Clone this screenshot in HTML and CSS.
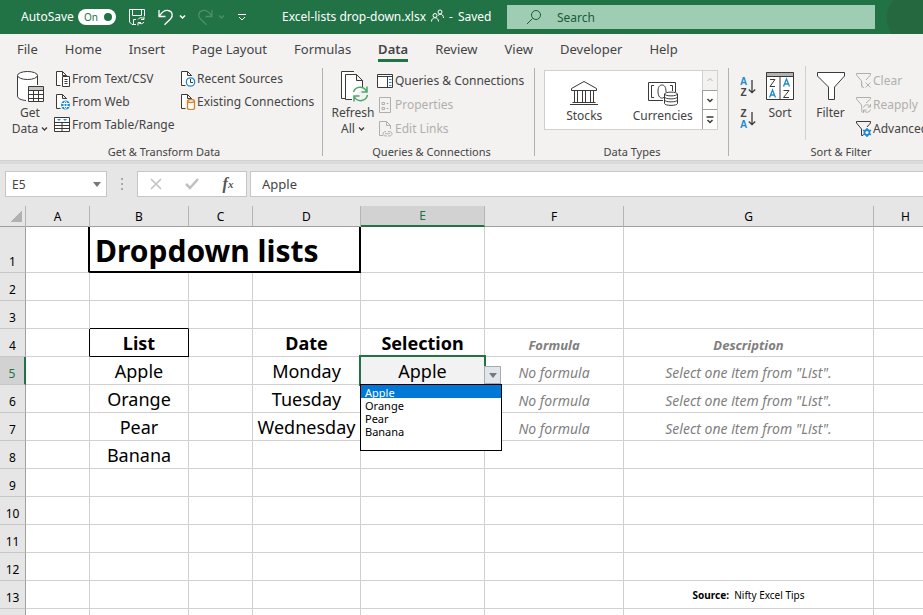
FILE: index.html
```
<!DOCTYPE html>
<html lang="en">
<head>
    <meta charset="UTF-8">
    <meta name="viewport" content="width=device-width, initial-scale=1.0">
    <title>Excel-lists drop-down.xlsx</title>
    <link rel="stylesheet" href="styles.css">
</head>
<body>

<header class="titlebar">
    <div class="quick-access">
        <label class="autosave">AutoSave
            <input type="checkbox" role="switch" checked>
            <span class="toggle">On<i class="knob"></i></span>
        </label>
        <button class="tool save" aria-label="Save">
            <svg width="18" height="18" viewBox="0 0 18 18"><path d="M8 16.500H4L1.500 14V1.500H16.500V8M4.500 1.500V7.500H13.500V1.500M5.500 16V11.500H8M10 11.500A3.500 3.500 0 0 1 15.800 11M16 8.500V11.500H13M16 14A3.500 3.500 0 0 1 10.300 14.500M10 17.500V14.500H13"/></svg>
        </button>
        <button class="tool undo" aria-label="Undo">
            <svg width="28" height="18" viewBox="0 0 28 18"><path stroke-width="1.300" d="M1 2V8.500H7.500M1.500 8C4 4 7 2 10 2.500C14.500 3 15.500 8 12.500 11L6.500 16.800"/><path stroke-width="1.500" d="M22 7.500L24.500 10L27 7.500"/></svg>
        </button>
        <button class="tool redo" aria-label="Redo" disabled>
            <svg width="28" height="18" viewBox="0 0 28 18"><path stroke-width="1.300" d="M14 2V8.500H7.500M13.500 8C11 4 8 2 5 2.500C.5 3 -.5 8 2.500 11L8.500 16.800"/><path stroke-width="1.500" d="M21 7.500L23.500 10L26 7.500"/></svg>
        </button>
        <button class="tool" aria-label="Customize Quick Access Toolbar">
            <svg width="8" height="8" viewBox="0 0 8 8"><path d="M0 1.500H8M1 4L4 7L7 4"/></svg>
        </button>
    </div>
    <div class="doc-title">
        <span>Excel-lists drop-down.xlsx</span>
        <svg width="13" height="14" viewBox="0 0 13 14"><circle cx="4" cy="6.500" r="2"/><path d="M.5 12.500C.5 7.500 7.500 7.500 7.500 12.500"/><circle cx="9" cy="3" r="2"/><path d="M7 6.500C9.500 4 12.500 5.500 12.500 9"/></svg>
        <span>-</span>
        <span>Saved</span>
    </div>
    <label class="search">
        <svg width="16" height="16" viewBox="0 0 16 16"><circle cx="10" cy="6" r="4.500"/><path d="M6.500 9.500L1 15"/></svg>
        <input type="text" placeholder="Search" aria-label="Search">
    </label>
    <div class="corner"></div>
</header>

<nav class="tabs">
    <button>File</button>
    <button>Home</button>
    <button>Insert</button>
    <button>Page Layout</button>
    <button>Formulas</button>
    <button class="active">Data</button>
    <button>Review</button>
    <button>View</button>
    <button>Developer</button>
    <button>Help</button>
</nav>

<div class="ribbon">
    <section class="group get-data">
        <div class="group-body">
            <button class="big">
                <svg width="30" height="34" viewBox="0 0 30 34"><path fill="#fff" d="M2.500 6V26C2.500 29 7 30.500 12 30.500H22V6"/><path class="ink" d="M2.500 6V26C2.500 28.500 6 30 11 30.500M22.500 6V15"/><ellipse class="ink" cx="12.500" cy="5.500" rx="10" ry="4" fill="#fff"/><path fill="#fff" d="M13 15H29V32H13z"/><path fill="#c8c6c4" d="M13 16H28V20H13z"/><path class="ink" d="M13.500 16.500H28.500V31.500H13.500zM13.500 20.500H28.500M13.500 24.500H28.500M13.500 28.500H28.500M18.500 20.500V31.500M23.500 20.500V31.500"/></svg>
                <span>Get</span>
                <span>Data <svg width="7" height="7" viewBox="0 0 7 7"><path class="ink" stroke-width="1.300" d="M1 1.500L3.500 4L6 1.500"/></svg></span>
            </button>
            <div class="stack">
                <button class="small">
                    <svg width="17" height="17" viewBox="0 0 17 17"><path class="page" d="M6.500 15.500H2.500V1.500H8.500L12.500 5.500V6M8.500 1.500V5.500H12.500"/><path class="ink" fill="#fff" d="M8.500 6.500H15.500V16.500H8.500zM10.500 9.500H13.500M10.500 11.500H13.500M10.500 13.500H13.500"/></svg>
                    From Text/CSV
                </button>
                <button class="small">
                    <svg width="17" height="17" viewBox="0 0 17 17"><path class="page" d="M6.500 15.500H2.500V1.500H8.500L12.500 5.500V6M8.500 1.500V5.500H12.500"/><circle cx="11.500" cy="12" r="4.500" fill="#1e8bcd"/><path stroke="#fff" fill="none" d="M7.500 10.500H15.500M7.500 13.500H15.500M11.500 8C9.500 10 9.500 14 11.500 16C13.500 14 13.500 10 11.500 8"/></svg>
                    From Web
                </button>
                <button class="small">
                    <svg width="17" height="17" viewBox="0 0 17 17"><path fill="#fff" d="M1 1H16V16H1z"/><path class="ink" d="M.5 1.500H15.500V15.500H.5zM.5 6.500H15.500M.5 9.500H15.500M.5 12.500H15.500M8 6.500V15.500"/><path fill="#1e8bcd" d="M3 3H7L5 5zM9 3H13L11 5z"/></svg>
                    From Table/Range
                </button>
            </div>
            <div class="stack">
                <button class="small">
                    <svg width="17" height="17" viewBox="0 0 17 17"><path class="page" d="M6.500 15.500H2.500V1.500H8.500L12.500 5.500V6M8.500 1.500V5.500H12.500"/><circle cx="11.500" cy="12" r="4.200" fill="#fff" stroke="#1e8bcd" stroke-width="1.300"/><path class="ink" d="M11.500 9V12.500H14"/></svg>
                    Recent Sources
                </button>
                <button class="small">
                    <svg width="17" height="17" viewBox="0 0 17 17"><path class="page" d="M6.500 15.500H2.500V1.500H8.500L12.500 5.500V6M8.500 1.500V5.500H12.500"/><path fill="#fff" stroke="#d9822b" stroke-width="1.300" d="M8.500 8V15.500C9 17 15 17 15.500 15.500V8C15 6 9 6 8.500 8C9 10 15 10 15.500 8"/></svg>
                    Existing Connections
                </button>
            </div>
        </div>
        <h2>Get &amp; Transform Data</h2>
    </section>

    <section class="group queries">
        <div class="group-body">
            <button class="big">
                <svg width="30" height="34" viewBox="0 0 30 34"><path class="ink" fill="#fff" d="M8 28.500H3.500V1.500H16"/><path class="ink" fill="#fff" d="M14 29.500H7.500V4.500H18.500L24.500 10.500V17M18.500 4.500V10.500H24.500"/><path fill="none" stroke="#4ea66a" stroke-width="1.500" d="M15.500 22A7 7 0 0 1 28.500 21.500M29 16.500V22H23.500M29.500 25A7 7 0 0 1 16.500 27M16 31.500V26H21.500"/></svg>
                <span>Refresh</span>
                <span>All <svg width="7" height="7" viewBox="0 0 7 7"><path class="ink" stroke-width="1.300" d="M1 1.500L3.500 4L6 1.500"/></svg></span>
            </button>
            <div class="stack loose">
                <button class="small">
                    <svg width="17" height="17" viewBox="0 0 17 17"><path class="ink" fill="#fff" d="M.5 2.500H15.500V15.500H.5zM.5 4.500H15.500M10.500 4.500V15.500"/><path stroke="#1e8bcd" d="M12 7.500H14.500M12 10.500H14.500M12 13.500H14.500"/></svg>
                    Queries &amp; Connections
                </button>
                <button class="small" disabled>
                    <svg width="17" height="17" viewBox="0 0 17 17"><path class="dim" d="M2.500 1.500H13.500V16.500H2.500zM5 6.500H7.500V8.500H5zM5 11.500H7.500V13.500H5zM9.500 7.500H11.500M9.500 12.500H11.500"/></svg>
                    Properties
                </button>
                <button class="small" disabled>
                    <svg width="17" height="17" viewBox="0 0 17 17"><path class="dim" d="M6 15.500H2.500V1.500H9.500L13.500 5.500V9M9.500 1.500V5.500H13.500M9 11.500C5 11.500 5 16 9 16H10M11 16H12C16 16 16 11.500 12 11.500H11M8 13.700H13"/></svg>
                    Edit Links
                </button>
            </div>
        </div>
        <h2>Queries &amp; Connections</h2>
    </section>

    <section class="group types">
        <div class="group-body">
            <div class="gallery">
                <button class="type">
                    <svg width="30" height="26" viewBox="0 0 30 26"><path class="ink" d="M2.500 8.500L15 1.500L27.500 8.500V10.500H2.500zM5.500 10.500V22M8.500 10.500V22M13.500 10.500V22M16.500 10.500V22M21.500 10.500V22M24.500 10.500V22M3.500 22.500H26.500M1 24.500H29"/></svg>
                    Stocks
                </button>
                <button class="type">
                    <svg width="32" height="26" viewBox="0 0 32 26"><path class="ink" d="M16 20.500H1.500V2.500H28.500V12M7 5.500H4.500V17.500H7M23 5.500H25.500V11"/><path class="ink" d="M17 17.500C13 19.500 11 16 11 11.500C11 7 12.500 5 15 5C17.500 5 19 7 19 12"/><path class="ink" fill="#fff" d="M17.500 14V23.500C18 26 30 26 30.500 23.500V14C30 11.500 18 11.500 17.500 14C18 16.500 30 16.500 30.500 14M17.500 17C18 19.500 30 19.500 30.500 17M17.500 20C18 22.500 30 22.500 30.500 20"/></svg>
                    Currencies
                </button>
                <div class="scroller">
                    <button aria-label="Scroll up" disabled><svg width="8" height="8" viewBox="0 0 8 8"><path class="dim" d="M1.500 5L4 2.500L6.500 5"/></svg></button>
                    <button aria-label="Scroll down"><svg width="8" height="8" viewBox="0 0 8 8"><path class="ink" stroke-width="1.500" d="M1.500 3L4 5.500L6.500 3"/></svg></button>
                    <button aria-label="More data types"><svg width="8" height="8" viewBox="0 0 8 8"><path class="ink" stroke-width="1.500" d="M.5 1H7.500M1.500 4L4 6.500L6.500 4"/></svg></button>
                </div>
            </div>
        </div>
        <h2>Data Types</h2>
    </section>

    <section class="group sort">
        <div class="group-body">
            <div class="sort-order">
                <button class="order" aria-label="Sort A to Z">
                    <span><b class="a">A</b><b>Z</b></span>
                    <svg width="8" height="14" viewBox="0 0 8 14"><path class="ink" stroke-width="1.300" d="M4 0V12.500M.8 9.500L4 12.700L7.200 9.500"/></svg>
                </button>
                <button class="order" aria-label="Sort Z to A">
                    <span><b>Z</b><b class="a">A</b></span>
                    <svg width="8" height="14" viewBox="0 0 8 14"><path class="ink" stroke-width="1.300" d="M4 0V12.500M.8 9.500L4 12.700L7.200 9.500"/></svg>
                </button>
            </div>
            <button class="big sort-dialog">
                <svg width="30" height="34" viewBox="0 0 30 34"><path fill="#fff" d="M1 2H29V29H1z"/><path fill="#b5b3b1" d="M1 2H29V6H1z"/><path class="ink" d="M1.500 2.500H28.500V29.500H1.500zM1.500 6.500H28.500M15 6.500V29.500M5 9.500H10L5 16.500H10M18.500 20.500H24L18.500 27.500H24"/><path fill="none" stroke="#1e8bcd" stroke-width="1.300" d="M4.500 27.500L7.500 20L10.500 27.500M5.500 25H9.500M18.500 16.500L21.500 9L24.500 16.500M19.500 14H23.500"/></svg>
                <span>Sort</span>
            </button>
            <button class="big filter">
                <svg width="30" height="34" viewBox="0 0 30 34"><path class="ink" fill="#fff" d="M1.500 2.500H28.500V6L18.500 17V29.500H12.500V17L1.500 6z"/></svg>
                <span>Filter</span>
            </button>
            <div class="stack loose">
                <button class="small" disabled>
                    <svg width="17" height="17" viewBox="0 0 17 17"><path class="dim" d="M7 15.500L6.500 9L1.500 3V1.500H15.500V3L11 8M6.500 9V13.500L9 16M10.500 10.500L15.500 15.500M15.500 10.500L10.500 15.500"/></svg>
                    Clear
                </button>
                <button class="small" disabled>
                    <svg width="17" height="17" viewBox="0 0 17 17"><path class="dim" d="M7 16.500L6.500 9L1.500 3V1.500H15.500V3L11 7M8.500 11.500A3.500 3.500 0 0 1 15 10.500M15.500 8V11H12.500M15.500 13.500A3.500 3.500 0 0 1 9 14.500M8.500 17V14H11.500"/></svg>
                    Reapply
                </button>
                <button class="small">
                    <svg width="17" height="17" viewBox="0 0 17 17"><path class="ink" d="M8 15.500H6.500V9L1.500 3V1.500H15.500V3L12 7"/><circle cx="12" cy="12.500" r="2.500" fill="none" stroke="#1e8bcd" stroke-width="1.800"/><path stroke="#1e8bcd" stroke-width="1.500" d="M12 8V10M12 15V17M8 10.200L10 11.300M14 13.700L16 14.800M8 14.800L10 13.700M14 11.300L16 10.200"/></svg>
                    Advanced
                </button>
            </div>
        </div>
        <h2>Sort &amp; Filter</h2>
    </section>
</div>

<div class="formula-bar">
    <div class="name-box">
        <input type="text" value="E5" aria-label="Name box">
        <button aria-label="Show names"><i class="arrow"></i></button>
    </div>
    <svg class="grip" width="2" height="12" viewBox="0 0 2 12"><path fill="#a8a8a8" d="M0 0H2V2H0zM0 5H2V7H0zM0 10H2V12H0z"/></svg>
    <div class="formula-tools">
        <button aria-label="Cancel" disabled><svg width="12" height="12" viewBox="0 0 12 12"><path stroke="#c0c0c0" stroke-width="1.500" d="M1 1L11 11M11 1L1 11"/></svg></button>
        <button aria-label="Enter" disabled><svg width="14" height="12" viewBox="0 0 14 12"><path fill="none" stroke="#c0c0c0" stroke-width="2.500" d="M1 6L5 10L13 1"/></svg></button>
        <button class="fx" aria-label="Insert function">f<sub>x</sub></button>
    </div>
    <input class="formula" type="text" value="Apple" aria-label="Formula">
</div>

<table class="sheet">
    <colgroup>
        <col class="col-head"><col class="col-a"><col class="col-b"><col class="col-c"><col class="col-d"><col class="col-e"><col class="col-f"><col class="col-g"><col>
    </colgroup>
    <thead>
        <tr><th><i class="select-all"></i></th><th>A</th><th>B</th><th>C</th><th>D</th><th class="current">E</th><th>F</th><th>G</th><th class="col-h">H</th></tr>
    </thead>
    <tbody>
        <tr class="tall"><th>1</th><td class="edge-thick"></td><td class="heading" colspan="3">Dropdown lists</td><td></td><td></td><td></td><td></td></tr>
        <tr><th>2</th><td></td><td></td><td></td><td></td><td></td><td></td><td></td><td></td></tr>
        <tr><th>3</th><td></td><td class="edge-bottom"></td><td></td><td></td><td></td><td></td><td></td><td></td></tr>
        <tr><th>4</th><td class="edge-right"></td><td class="strong edge-bottom edge-right">List</td><td></td><td class="strong">Date</td><td class="strong">Selection</td><td class="note note-head">Formula</td><td class="note note-head">Description</td><td></td></tr>
        <tr>
            <th class="current">5</th><td></td><td>Apple</td><td></td><td>Monday</td>
            <td class="selected">Apple
                <div class="cell-frame"></div>
                <button class="cell-arrow" aria-label="Open list"><i class="arrow"></i></button>
                <select class="cell-list" size="5" aria-label="Selection">
                    <option selected>Apple</option>
                    <option>Orange</option>
                    <option>Pear</option>
                    <option>Banana</option>
                </select>
            </td>
            <td class="note">No formula</td><td class="note">Select one item from "List".</td><td></td>
        </tr>
        <tr><th>6</th><td></td><td>Orange</td><td></td><td>Tuesday</td><td></td><td class="note">No formula</td><td class="note">Select one item from "List".</td><td></td></tr>
        <tr><th>7</th><td></td><td>Pear</td><td></td><td>Wednesday</td><td></td><td class="note">No formula</td><td class="note">Select one item from "List".</td><td></td></tr>
        <tr><th>8</th><td></td><td>Banana</td><td></td><td></td><td></td><td></td><td></td><td></td></tr>
        <tr><th>9</th><td></td><td></td><td></td><td></td><td></td><td></td><td></td><td></td></tr>
        <tr><th>10</th><td></td><td></td><td></td><td></td><td></td><td></td><td></td><td></td></tr>
        <tr><th>11</th><td></td><td></td><td></td><td></td><td></td><td></td><td></td><td></td></tr>
        <tr><th>12</th><td></td><td></td><td></td><td></td><td></td><td></td><td></td><td></td></tr>
        <tr><th>13</th><td></td><td></td><td></td><td></td><td></td><td></td><td class="source"><b>Source:</b>&nbsp; Nifty Excel Tips</td><td></td></tr>
        <tr><th></th><td></td><td></td><td></td><td></td><td></td><td></td><td></td><td></td></tr>
    </tbody>
</table>

</body>
</html>
```
FILE: styles.css
```
* {
    box-sizing: border-box;
}
body {
    margin: 0;
    height: 100vh;
    overflow: hidden;
    background-color: #e6e6e6;
    color: #444;
    font-family: "Noto Sans", "Open Sans", sans-serif;
    font-size: 12px;
}
button, input, select {
    font: inherit;
    color: inherit;
    border: none;
    border-radius: 0;
    padding: 0;
    margin: 0;
    background: none;
    outline: none;
}
svg {
    flex: none;
}
.ink {
    stroke: #3b3a39;
}
.page {
    stroke: #3b3a39;
    fill: #fff;
}
.dim {
    stroke: #b1afad;
}
.ink:not([fill]), .dim {
    fill: none;
}

/* title bar */
.titlebar {
    display: flex;
    align-items: center;
    height: 34px;
    background-color: #217346;
    color: #fff;
    overflow: hidden;
}
.titlebar svg {
    fill: none;
    stroke: currentColor;
}
.quick-access {
    display: flex;
    align-items: center;
    flex: 0 0 282px;
    padding-left: 21px;
    padding-bottom: 1px;
    gap: 12px;
}
.autosave {
    display: flex;
    align-items: center;
    gap: 4px;
}
.autosave input {
    position: absolute;
    opacity: 0;
}
.toggle {
    display: flex;
    align-items: center;
    justify-content: space-between;
    width: 38px;
    height: 16px;
    padding: 0 4px 0 6px;
    border-radius: 8px;
    background-color: #fff;
    color: #217346;
    font-size: 10px;
}
.knob {
    width: 8px;
    height: 8px;
    border-radius: 50%;
    background-color: #217346;
}
.tool {
    display: flex;
    align-items: center;
}
.redo {
    color: #4c8f6a;
}
.doc-title {
    display: flex;
    align-items: center;
    flex: 0 0 225px;
    gap: 5px;
    padding-bottom: 2px;
    white-space: nowrap;
}
.search {
    display: flex;
    align-items: center;
    flex: 1;
    gap: 15px;
    height: 24px;
    padding-left: 19px;
    background-color: #9fcdb3;
    color: #185c37;
}
.search input {
    flex: 1;
    min-width: 0;
}
.search input::placeholder {
    color: #185c37;
    opacity: 1;
}
.corner {
    flex: 0 0 48px;
    height: 34px;
    background: radial-gradient(circle at 38px 18px, #25683f 26px, #217346 27px);
}

/* tabs */
.tabs {
    display: flex;
    gap: 27px;
    height: 32px;
    padding: 2px 17px 0;
    background-color: #f3f2f1;
    font-size: 13px;
}
.tabs button {
    height: 26px;
    white-space: nowrap;
}
.tabs .active {
    border-bottom: 3px solid #217346;
    padding-top: 3px;
    font-weight: 600;
}

/* ribbon */
.ribbon {
    display: flex;
    height: 95px;
    background-color: #f3f2f1;
    border-bottom: 1px solid #d0d0d0;
    overflow: hidden;
}
.group {
    display: flex;
    flex-direction: column;
    justify-content: space-between;
    flex: none;
    position: relative;
}
.group + .group::before {
    content: "";
    position: absolute;
    left: 0;
    top: 2px;
    bottom: 4px;
    width: 1px;
    background-color: #b3b0ad;
}
.group h2 {
    margin: 0;
    font-size: 11px;
    font-weight: 400;
    line-height: 16px;
    text-align: center;
}
.get-data {
    width: 322px;
    padding-left: 6px;
}
.queries {
    width: 212px;
    padding-left: 7px;
}
.types {
    width: 194px;
    padding: 0 8px 0 10px;
}
.sort {
    width: 214px;
    padding-left: 12px;
}
.group-body {
    display: flex;
    white-space: nowrap;
}
.group-body > * {
    flex: none;
}
.big {
    display: flex;
    flex-direction: column;
    align-items: center;
    width: 48px;
    padding-top: 4px;
    line-height: 16px;
}
.big > svg {
    margin-bottom: 1px;
}
.stack {
    display: grid;
    grid-auto-rows: 23px;
    align-content: start;
    padding-top: 1px;
    width: 125px;
}
.stack.loose {
    grid-auto-rows: 24px;
    padding-top: 2px;
}
.small {
    display: flex;
    align-items: center;
    gap: 1px;
}
.small:disabled {
    color: #b1afad;
}
.gallery {
    display: flex;
    width: 174px;
    height: 60px;
    margin-top: 4px;
    border: 1px solid #d2d0ce;
    background-color: #fff;
}
.type {
    display: flex;
    flex-direction: column;
    align-items: center;
    flex: 1;
    padding-top: 9px;
    line-height: 20px;
}
.scroller {
    display: flex;
    flex-direction: column;
    width: 15px;
}
.scroller button {
    display: flex;
    align-items: center;
    justify-content: center;
    flex: 1;
    border: 1px solid #a19f9d;
    border-width: 1px 0 0 1px;
}
.scroller button:disabled {
    border-color: #d2d0ce;
    border-top: none;
    background-color: #f3f2f1;
}
.sort-order {
    display: flex;
    flex-direction: column;
    gap: 10px;
    width: 24px;
    padding-top: 10px;
}
.order {
    display: flex;
    align-items: center;
    gap: 1px;
    font-family: "Liberation Sans", sans-serif;
}
.order b {
    display: block;
    font-size: 10px;
    line-height: 11px;
}
.order .a {
    color: #1e8bcd;
}
.sort-dialog {
    width: 32px;
}
.filter {
    margin: 0 0 0 9px;
    width: 50px;
    border-left: 1px solid #d2d0ce;
}

/* formula bar */
.formula-bar {
    display: flex;
    align-items: center;
    height: 45px;
    padding: 0 0 2px 5px;
    border-top: 3px solid #dadada;
    background-color: #e6e6e6;
}
.name-box, .formula-tools, .formula {
    display: flex;
    align-items: center;
    height: 26px;
    border: 1px solid #c6c6c6;
    background-color: #fff;
}
.name-box {
    width: 102px;
}
.name-box input {
    flex: 1;
    min-width: 0;
    padding-left: 6px;
}
.name-box button {
    padding: 0 5px;
}
.arrow {
    display: block;
    border: 4px solid transparent;
    border-top: 5px solid #777;
    border-bottom: none;
}
.grip {
    margin: 0 14px;
}
.formula-tools {
    width: 110px;
    margin-right: 3px;
}
.formula-tools button {
    display: flex;
    align-items: center;
    justify-content: center;
    flex: 1;
}
.formula-tools .fx {
    font-family: "Liberation Serif", serif;
    font-size: 16px;
    font-style: italic;
    font-weight: 700;
    color: #555;
}
.fx sub {
    font-size: 11px;
}
.formula {
    flex: 1;
    padding-left: 11px;
    border-right: none;
    font-size: 13px;
}

/* sheet */
.sheet {
    width: 100%;
    table-layout: fixed;
    border-collapse: separate;
    border-spacing: 0;
    background-color: #fff;
    color: #000;
}
.col-head {
    width: 26px;
}
.col-a, .col-c {
    width: 64px;
}
.col-b {
    width: 99px;
}
.col-d {
    width: 108px;
}
.col-e {
    width: 124px;
}
.col-f {
    width: 139px;
}
.col-g {
    width: 250px;
}
.sheet th {
    padding: 0;
    border-right: 1px solid #b5b5b5;
    border-bottom: 1px solid #9f9f9f;
    background-color: #e6e6e6;
    font-size: 12px;
    font-weight: 400;
    line-height: 20px;
}
.sheet thead th {
    height: 21px;
    line-height: 19px;
}
.sheet .col-h {
    padding-left: 14px;
    border-right: none;
}
.sheet tbody th {
    height: 28px;
    border-right-color: #9f9f9f;
    border-bottom-color: #c6c6c6;
    vertical-align: bottom;
}
.sheet .tall th {
    height: 46px;
}
.sheet thead .current {
    border-bottom: 2px solid #217346;
    background-color: #d2d2d2;
    color: #217346;
}
.sheet tbody .current {
    border-right: 2px solid #217346;
    background-color: #d2d2d2;
    color: #217346;
}
.select-all {
    display: block;
    margin-left: 10px;
    width: 12px;
    height: 12px;
    background: linear-gradient(135deg, transparent 50%, #b1b1b1 50%);
}
.sheet td {
    padding: 0;
    border-right: 1px solid #d0d0d0;
    border-bottom: 1px solid #d0d0d0;
    font-size: 18px;
    line-height: 24px;
    text-align: center;
    white-space: nowrap;
}
.sheet td:last-child {
    border-right: none;
}
.sheet .heading {
    padding: 3px 0 0 5px;
    border-right: 2px solid #000;
    border-bottom: 2px solid #000;
    font-size: 30px;
    font-weight: 700;
    line-height: 40px;
    text-align: left;
}
.sheet .edge-thick {
    border-right: 2px solid #000;
}
.sheet .edge-right {
    border-right-color: #000;
}
.sheet .edge-bottom {
    border-bottom-color: #000;
}
.strong {
    font-weight: 700;
}
.sheet .note {
    color: #7f7f7f;
    font-size: 14px;
    font-style: italic;
    line-height: 22px;
    vertical-align: bottom;
}
.sheet .note-head {
    font-size: 13px;
    font-weight: 700;
}
.sheet .source {
    font-size: 10px;
}
.sheet .selected {
    position: relative;
    background-color: #f2f2f2;
}
.cell-frame {
    position: absolute;
    inset: -2px;
    border: 2px solid #217346;
}
.cell-arrow {
    position: absolute;
    left: 100%;
    bottom: 0;
    display: flex;
    align-items: center;
    justify-content: center;
    width: 17px;
    height: 18px;
    border: 1px solid #ababab;
    background-color: #e1e5ec;
}
.cell-list {
    position: absolute;
    z-index: 1;
    top: 100%;
    left: -1px;
    width: 142px;
    height: 67px;
    border: 1px solid #000;
    background-color: #fff;
    font-size: 11px;
    overflow: hidden;
}
.cell-list option {
    height: 13px;
    min-height: 13px;
    padding: 0 4px;
    line-height: 13px;
}
.cell-list option:checked {
    background: #0078d7 linear-gradient(#0078d7, #0078d7);
    color: #fff;
}
```
